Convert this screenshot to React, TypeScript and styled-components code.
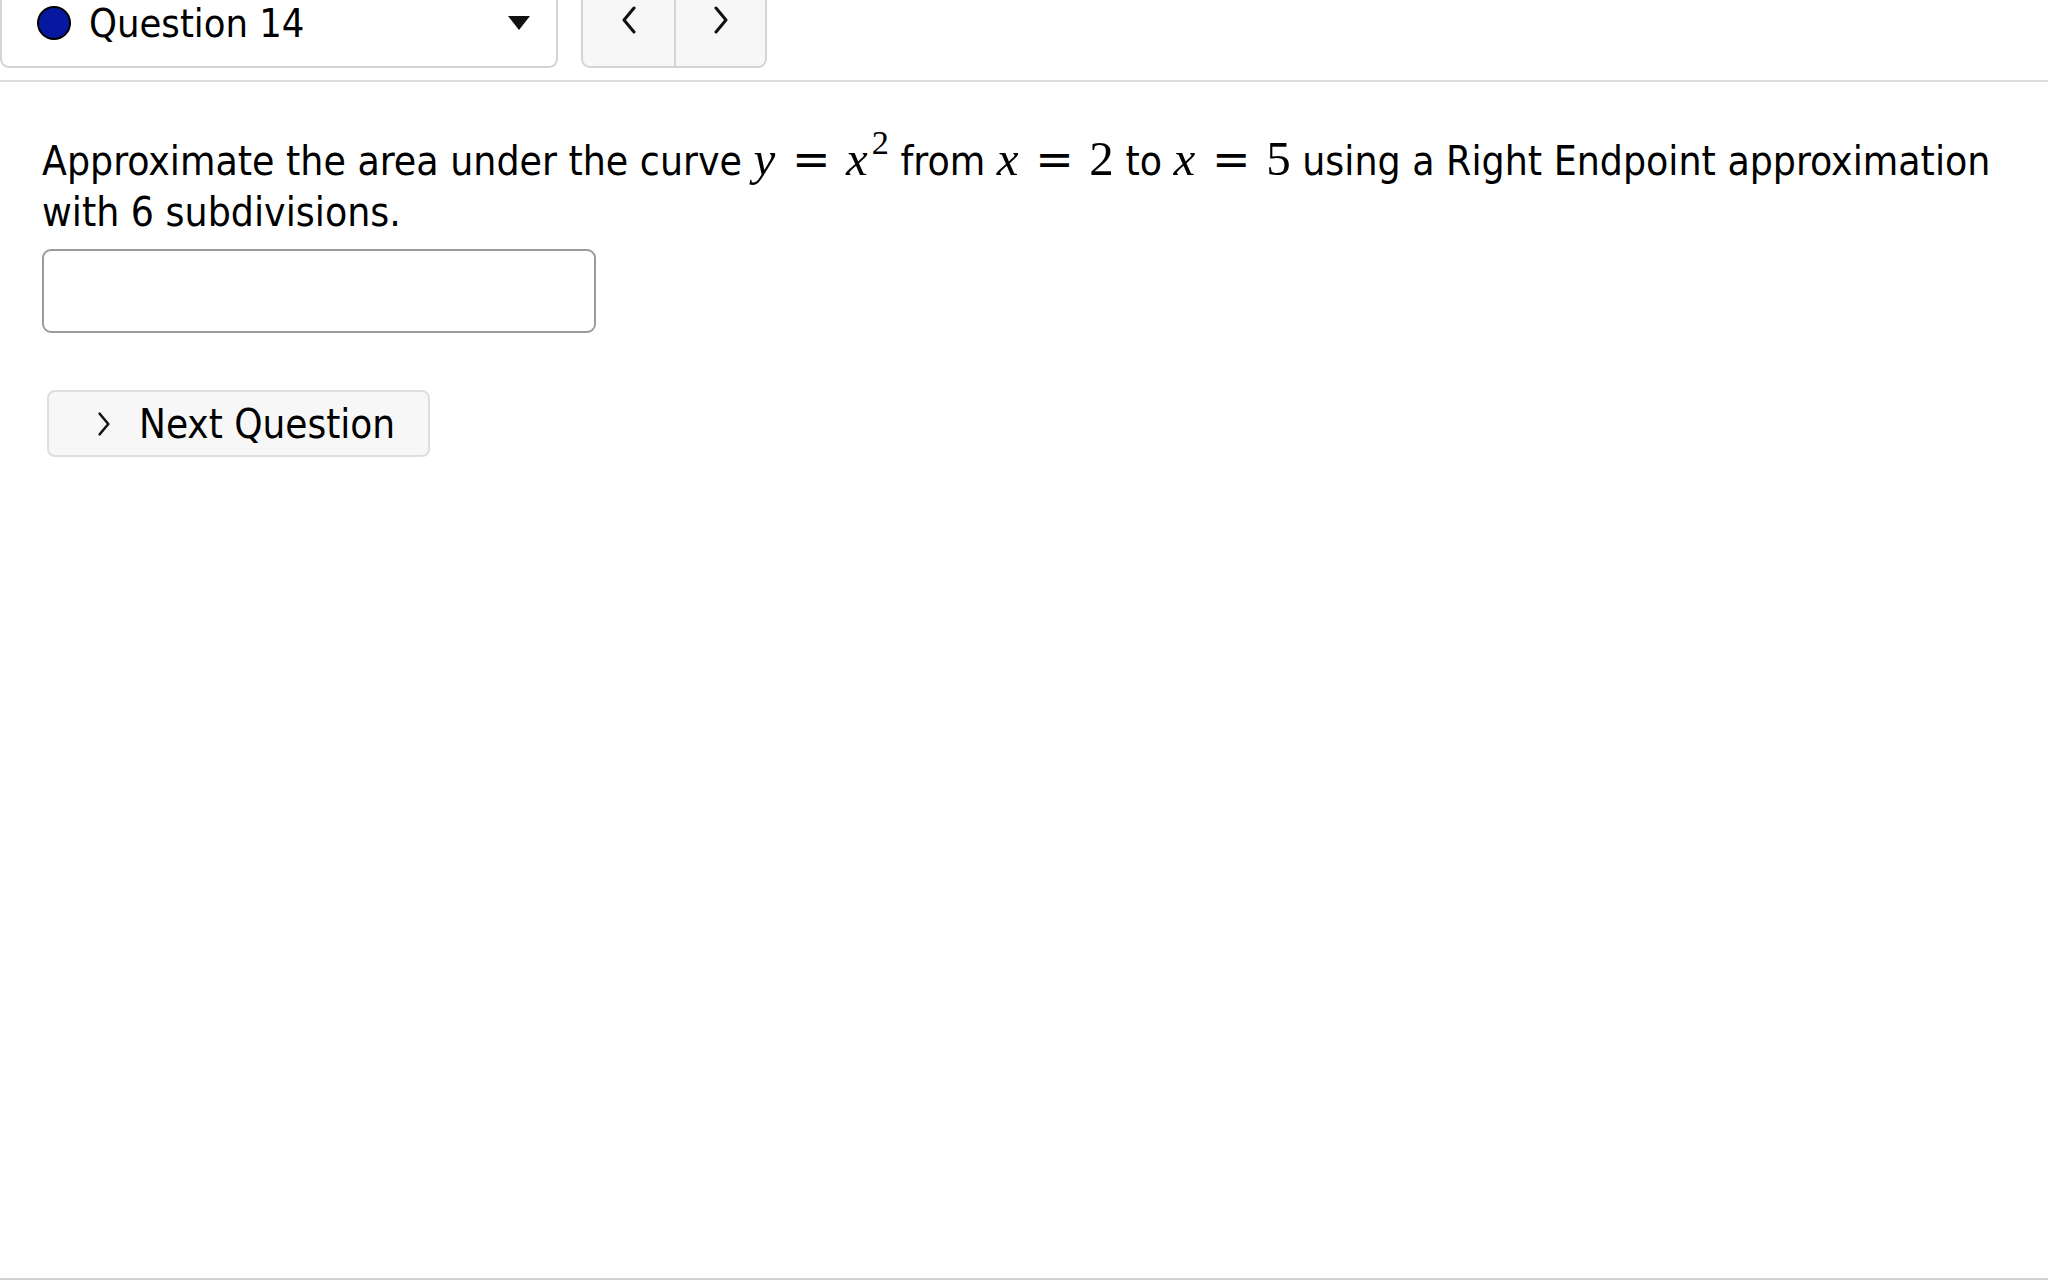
import styled, { createGlobalStyle } from "styled-components";

const GlobalStyle = createGlobalStyle`
  html, body {
    margin: 0;
    padding: 0;
    background: #fff;
    overflow: hidden;
  }
  body {
    font-family: "DejaVu Sans Condensed", "DejaVu Sans", sans-serif;
    font-stretch: condensed;
    color: #000;
  }
`;

const Page = styled.div`
  height: 1280px;
  box-sizing: border-box;
  border-bottom: 2px solid #cfcfcf;
  display: flex;
  flex-direction: column;
`;

/* top bar */

const TopBar = styled.div`
  display: flex;
  align-items: flex-start;
  gap: 23px;
  height: 68px;
`;

const Picker = styled.div`
  width: 558px;
  height: 68px;
  box-sizing: border-box;
  border: 2px solid #d4d4d4;
  border-top: none;
  border-radius: 0 0 9px 9px;
  display: flex;
  align-items: flex-start;
  padding: 2px 26px 0 35px;
  gap: 18px;
`;

const Dot = styled.span`
  width: 30px;
  height: 30px;
  margin-top: 4px;
  border-radius: 50%;
  background: #0618a0;
  border: 2px solid #000;
  flex-shrink: 0;
`;

const PickerLabel = styled.span`
  font-size: 39.5px;
  line-height: 42px;
  flex: 1;
`;

const Caret = styled.svg`
  width: 22px;
  height: 14px;
  margin-top: 14px;
`;

const NavGroup = styled.div`
  display: flex;
  height: 68px;
  box-sizing: border-box;
  border: 2px solid #d4d4d4;
  border-top: none;
  border-radius: 0 0 9px 9px;
  background: #f7f7f7;
  overflow: hidden;
`;

const NavButton = styled.div<{ $divider?: boolean }>`
  width: 91px;
  display: flex;
  justify-content: center;
  padding-top: 6px;
  box-sizing: border-box;
  border-left: ${(p) => (p.$divider ? "2px solid #d4d4d4" : "none")};
`;

const Divider = styled.div`
  height: 2px;
  background: #dcdcdc;
  margin-top: 12px;
`;

/* question */

const Content = styled.div`
  padding: 0 42px;
`;

const Prompt = styled.p`
  margin: 54px 0 0;
  font-size: 40.5px;
  line-height: 51px;
  max-width: 1960px;
`;

const MathSpan = styled.span`
  font-family: "Liberation Serif", "DejaVu Serif", serif;
  font-stretch: normal;
  font-size: 49px;
  line-height: 30px;
  white-space: nowrap;
`;

const Var = styled.i`
  font-style: italic;
  margin-right: 1px;
`;

const Op = styled.span`
  font-family: "DejaVu Serif", serif;
  font-size: 46px;
  margin: 0 0.34em;
`;

const Sup = styled.span`
  font-size: 0.7em;
  position: relative;
  top: -0.62em;
  margin-left: 3px;
`;

const AnswerInput = styled.input`
  display: block;
  margin-top: 11px;
  width: 554px;
  height: 84px;
  box-sizing: border-box;
  border: 2px solid #9a9a9a;
  border-radius: 9px;
  background: #fff;
  outline: none;
`;

const NextButton = styled.button`
  margin: 57px 0 0 5px;
  width: 383px;
  height: 67px;
  box-sizing: border-box;
  border: 2px solid #dedede;
  border-radius: 8px;
  background: #f7f7f7;
  display: flex;
  align-items: center;
  gap: 28px;
  padding: 0 0 0 48px;
  font-family: inherit;
  font-stretch: condensed;
  font-size: 40px;
  color: #000;
`;

const Chevron = ({ dir, w = 16, h = 28 }: { dir: "left" | "right"; w?: number; h?: number }) => (
  <svg width={w} height={h} viewBox="0 0 16 28">
    <polyline
      points={dir === "left" ? "13,2 3,14 13,26" : "3,2 13,14 3,26"}
      fill="none"
      stroke="#111"
      strokeWidth="3"
      strokeLinecap="round"
      strokeLinejoin="round"
    />
  </svg>
);

const App = () => {
  return (
    <Page>
      <GlobalStyle />

      {/* Question picker + prev/next */}
      <TopBar>
        <Picker>
          <Dot />
          <PickerLabel>Question 14</PickerLabel>
          <Caret viewBox="0 0 22 14">
            <polygon points="0,0 22,0 11,14" fill="#111" />
          </Caret>
        </Picker>
        <NavGroup>
          <NavButton>
            <Chevron dir="left" />
          </NavButton>
          <NavButton $divider>
            <Chevron dir="right" />
          </NavButton>
        </NavGroup>
      </TopBar>
      <Divider />

      {/* Question body */}
      <Content>
        <Prompt>
          Approximate the area under the curve{" "}
          <MathSpan>
            <Var>y</Var>
            <Op>=</Op>
            <Var>x</Var>
            <Sup>2</Sup>
          </MathSpan>{" "}
          from{" "}
          <MathSpan>
            <Var>x</Var>
            <Op>=</Op>2
          </MathSpan>{" "}
          to{" "}
          <MathSpan>
            <Var>x</Var>
            <Op>=</Op>5
          </MathSpan>{" "}
          using a Right Endpoint approximation with 6 subdivisions.
        </Prompt>

        <AnswerInput type="text" />

        <NextButton>
          <Chevron dir="right" w={14} h={24} />
          <span>Next Question</span>
        </NextButton>
      </Content>
    </Page>
  );
};

export default App;
